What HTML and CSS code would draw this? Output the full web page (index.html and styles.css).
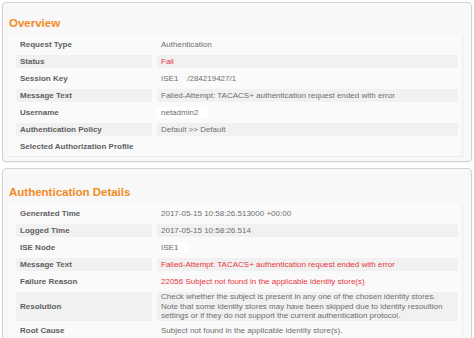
FILE: index.html
```html
<!DOCTYPE html>
<html>
<head>
<meta charset="utf-8">
<link rel="stylesheet" href="styles.css">
</head>
<body>
<section class="card">
  <h2 class="title">Overview</h2>
  <div class="panel">
    <div class="row"><div class="lbl">Request Type</div><div class="val">Authentication</div></div>
    <div class="row alt"><div class="lbl">Status</div><div class="val red">Fail</div></div>
    <div class="row"><div class="lbl">Session Key</div><div class="val">ISE1    /284219427/1</div></div>
    <div class="row alt"><div class="lbl">Message Text</div><div class="val">Failed-Attempt: TACACS+ authentication request ended with error</div></div>
    <div class="row"><div class="lbl">Username</div><div class="val"><span class="hl">netadmin2</span></div></div>
    <div class="row alt"><div class="lbl">Authentication Policy</div><div class="val">Default &gt;&gt; Default</div></div>
    <div class="row"><div class="lbl">Selected Authorization Profile</div><div class="val"></div></div>
  </div>
</section>
<section class="card second">
  <h2 class="title">Authentication Details</h2>
  <div class="panel">
    <div class="row"><div class="lbl">Generated Time</div><div class="val">2017-05-15 10:58:26.513000 +00:00</div></div>
    <div class="row alt"><div class="lbl">Logged Time</div><div class="val">2017-05-15 10:58:26.514</div></div>
    <div class="row"><div class="lbl">ISE Node</div><div class="val">ISE1<span class="hl small">&nbsp;</span></div></div>
    <div class="row alt"><div class="lbl">Message Text</div><div class="val red">Failed-Attempt: TACACS+ authentication request ended with error</div></div>
    <div class="row"><div class="lbl">Failure Reason</div><div class="val red">22056 Subject not found in the applicable identity store(s)</div></div>
    <div class="row alt tall"><div class="lbl">Resolution</div><div class="val multi">Check whether the subject is present in any one of the chosen identity stores.<br>Note that some identity stores may have been skipped due to identity resoultion<br>settings or if they do not support the current authentication protocol.</div></div>
    <div class="row"><div class="lbl">Root Cause</div><div class="val">Subject not found in the applicable identity store(s).</div></div>
  </div>
</section>
</body>
</html>
```
FILE: styles.css
```css
html, body {
  margin: 0;
  padding: 0;
  background: #ffffff;
}
body {
  padding: 2px;
  font-family: "Liberation Sans", Arial, sans-serif;
}
.card {
  border: 1px solid #d2d2d2;
  border-radius: 4px;
  background: #f8f8f8;
  padding: 0 8px 4px 5px;
  box-shadow: 0 1px 1px rgba(0,0,0,0.05);
}
.card.second {
  margin-top: 6px;
}
.title {
  margin: 13px 0 5px 1px;
  font-size: 11.5px;
  line-height: 14px;
  font-weight: bold;
  color: #f28a1f;
}
.second .title {
  margin-top: 16px;
}
.panel {
  background: #fafafa;
  border-right: 1px solid #ededed;
  border-bottom: 1px solid #ededed;
  padding: 3px 4px 3px 8px;
  display: flex;
  flex-direction: column;
  gap: 4px;
}
.row {
  display: grid;
  grid-template-columns: 136px 1fr;
  column-gap: 5px;
  height: 13px;
}
.row.tall {
  height: 28px;
}
.lbl, .val {
  display: flex;
  align-items: center;
  padding-left: 4px;
  font-size: 8px;
  white-space: pre;
}
.lbl {
  font-weight: bold;
  color: #606060;
}
.val {
  color: #6e6e6e;
}
.alt .lbl, .alt .val {
  background: #f1f1f1;
}
.red {
  color: #e6353f;
}
.multi {
  white-space: normal;
  line-height: 9.5px;
}
.hl {
  background: #ffffff;
  padding: 1px 10px 1px 0;
  margin-left: -4px;
  padding-left: 4px;
}
.hl.small {
  margin-left: 0;
  padding: 1px 4px;
}
```
